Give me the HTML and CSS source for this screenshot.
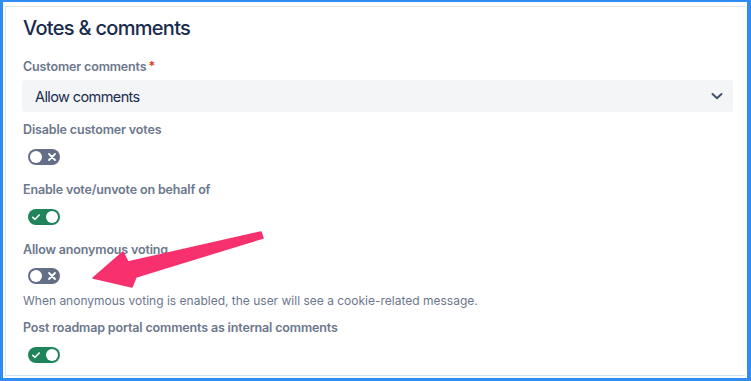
FILE: index.html
```html
<!DOCTYPE html>
<html>

<head>
    <meta charset="utf-8">
    <link rel="stylesheet" href="styles.css">
</head>

<body>

    <div class="frame">
        <div class="card">
            <h2 class="card-title">Votes &amp; comments</h2>

            <div class="field field-select">
                <div class="label">Customer comments<span class="required">*</span></div>
                <div class="select">
                    <span>Allow comments</span>
                    <svg class="chevron" width="14" height="14" viewBox="0 0 14 14">
                        <path d="M2.5 5 L7 9.2 L11.5 5" fill="none" stroke="#42526E" stroke-width="2" stroke-linecap="round" stroke-linejoin="round" />
                    </svg>
                </div>
            </div>

            <div class="field">
                <div class="label">Disable customer votes</div>
                <div class="toggle off">
                    <span class="knob"></span>
                    <svg class="toggle-icon" width="10" height="10" viewBox="0 0 10 10">
                        <path d="M2 2 L8 8 M8 2 L2 8" stroke="#fff" stroke-width="1.8" stroke-linecap="round" />
                    </svg>
                </div>
            </div>

            <div class="field">
                <div class="label">Enable vote/unvote on behalf of</div>
                <div class="toggle on">
                    <svg class="toggle-icon" width="10" height="10" viewBox="0 0 10 10">
                        <path d="M1.8 5.3 L4 7.3 L8.2 3" fill="none" stroke="#fff" stroke-width="1.6" stroke-linecap="round" stroke-linejoin="round" />
                    </svg>
                    <span class="knob"></span>
                </div>
            </div>

            <div class="field field-help">
                <div class="label">Allow anonymous voting</div>
                <div class="toggle off">
                    <span class="knob"></span>
                    <svg class="toggle-icon" width="10" height="10" viewBox="0 0 10 10">
                        <path d="M2 2 L8 8 M8 2 L2 8" stroke="#fff" stroke-width="1.8" stroke-linecap="round" />
                    </svg>
                </div>
                <div class="help">When anonymous voting is enabled, the user will see a cookie-related message.</div>
            </div>

            <div class="field">
                <div class="label">Post roadmap portal comments as internal comments</div>
                <div class="toggle on">
                    <svg class="toggle-icon" width="10" height="10" viewBox="0 0 10 10">
                        <path d="M1.8 5.3 L4 7.3 L8.2 3" fill="none" stroke="#fff" stroke-width="1.6" stroke-linecap="round" stroke-linejoin="round" />
                    </svg>
                    <span class="knob"></span>
                </div>
            </div>
        </div>

        <!-- annotation arrow over the form -->
        <svg class="arrow" width="751" height="381" viewBox="0 0 751 381">
            <polygon points="93,278 123,252 128,262 261,232 263,238 136,277 132,287" fill="#F7306E" stroke="#F7306E" stroke-width="1.5" stroke-linejoin="round" />
        </svg>
    </div>

</body>

</html>
```

FILE: styles.css
```css
* {
    box-sizing: border-box;
}

body {
    margin: 0;
    background: #fff;
    font-family: Inter, "Noto Sans", sans-serif;
}

.frame {
    position: relative;
    width: 751px;
    height: 381px;
    border: 3px solid #2F8CF0;
    border-top-width: 2px;
    border-right-width: 4px;
    padding: 4px 2px 2px 2px;
    overflow: hidden;
}

.card {
    height: 100%;
    border: 1px solid #E4E6EA;
    border-bottom-color: #CFE2F8;
    border-right: 0;
    padding: 9px 12px 0 17px;
}

.card-title {
    margin: 0 0 17px;
    font-size: 20px;
    line-height: 24px;
    font-weight: 500;
    letter-spacing: -0.7px;
    color: #172B4D;
}

.label {
    font-size: 12.5px;
    line-height: 20px;
    font-weight: 600;
    letter-spacing: -0.15px;
    color: #6B778C;
}

.required {
    color: #DE350B;
    margin-left: 2px;
}

.field {
    margin-bottom: 15px;
}

.field-select {
    margin-bottom: 8px;
}

.field-select .label {
    margin-bottom: 3px;
}

.select {
    display: flex;
    align-items: center;
    justify-content: space-between;
    height: 32px;
    margin-left: -1px;
    padding: 0 9px 0 13px;
    background: #F4F5F7;
    border-radius: 3px;
    font-size: 14.5px;
    letter-spacing: -0.6px;
    color: #172B4D;
}

.field .label + .toggle {
    margin-top: 9px;
}

.toggle {
    display: flex;
    align-items: center;
    justify-content: space-between;
    width: 32px;
    height: 16px;
    margin-left: 5px;
    padding: 0 2px;
    border-radius: 8px;
}

.toggle.off {
    background: #626F86;
}

.toggle.on {
    background: #1F845A;
}

.knob {
    width: 12px;
    height: 12px;
    border-radius: 50%;
    background: #fff;
}

.toggle-icon {
    display: block;
    margin: 0 1px;
}

.field-help {
    margin-bottom: 9px;
}

.field-help .label + .toggle {
    margin-top: 8px;
}

.help {
    margin-top: 9px;
    font-size: 12px;
    line-height: 16px;
    color: #6B778C;
}

.arrow {
    position: absolute;
    top: -2px;
    left: -3px;
    pointer-events: none;
}
```
